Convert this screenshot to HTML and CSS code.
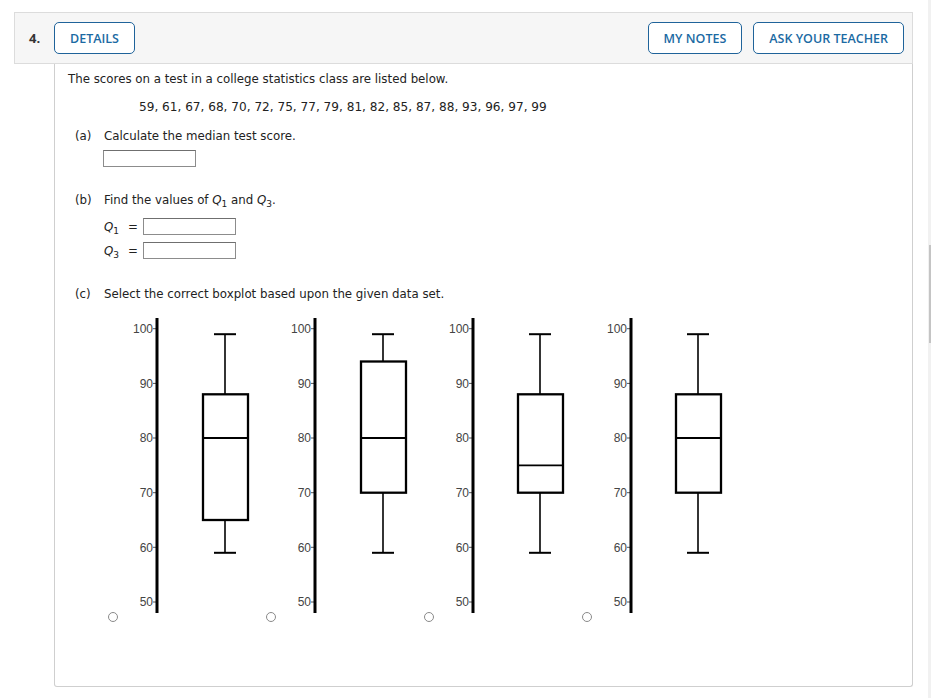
FILE: index.html
```html
<!DOCTYPE html>
<html>
<head>
<meta charset="utf-8">
<link rel="stylesheet" href="styles.css">
</head>
<body>
<div class="page">
  <div class="main">
    <div class="card">
      <div class="head">
        <span class="qnum">4.</span>
        <span class="btn">DETAILS</span>
        <span class="spacer"></span>
        <span class="btn notes">MY NOTES</span>
        <span class="btn">ASK YOUR TEACHER</span>
      </div>
      <div class="body">
        <p class="intro">The scores on a test in a college statistics class are listed below.</p>
        <p class="data">59, 61, 67, 68, 70, 72, 75, 77, 79, 81, 82, 85, 87, 88, 93, 96, 97, 99</p>

        <div class="part pa">
          <div class="prow"><span class="plabel">(a)</span><span>Calculate the median test score.</span></div>
          <div class="ans"><span class="inp"></span></div>
        </div>

        <div class="part pb">
          <div class="prow"><span class="plabel">(b)</span><span>Find the values of <i class="q">Q</i><sub>1</sub> and <i class="q">Q</i><sub>3</sub>.</span></div>
          <div class="qrow first"><span class="qlab"><i class="q">Q</i><sub>1</sub></span><span class="eq">=</span><span class="inp"></span></div>
          <div class="qrow"><span class="qlab"><i class="q">Q</i><sub>3</sub></span><span class="eq">=</span><span class="inp"></span></div>
        </div>

        <div class="part pc">
          <div class="prow"><span class="plabel">(c)</span><span>Select the correct boxplot based upon the given data set.</span></div>
          <div class="options">
            <div class="opt">
              <span class="radio"></span>
              <svg class="plot" width="140" height="310" viewBox="0 0 140 310">
                <g class="ticks">
                  <text x="35" y="17">100</text><text x="35" y="72">90</text><text x="35" y="126">80</text><text x="35" y="181">70</text><text x="35" y="236">60</text><text x="35" y="290">50</text>
                  <path d="M35 12.7H39M35 67.4H39M35 122H39M35 176.7H39M35 231.3H39M35 286H39" stroke="#555" stroke-width="1"/>
                </g>
                <line x1="39" y1="2" x2="39" y2="297" stroke="#000" stroke-width="3"/>
                <line x1="107" y1="18.2" x2="107" y2="78.3" stroke="#111" stroke-width="1.7"/>
                <line x1="107" y1="204" x2="107" y2="236.8" stroke="#111" stroke-width="1.7"/>
                <line x1="96" y1="18.2" x2="118" y2="18.2" stroke="#000" stroke-width="2"/>
                <line x1="96" y1="236.8" x2="118" y2="236.8" stroke="#000" stroke-width="2"/>
                <rect x="85" y="78.3" width="45" height="125.7" fill="#fff" stroke="#000" stroke-width="2.3"/>
                <line x1="85" y1="122" x2="130" y2="122" stroke="#000" stroke-width="1.8"/>
              </svg>
            </div>
            <div class="opt">
              <span class="radio"></span>
              <svg class="plot" width="140" height="310" viewBox="0 0 140 310">
                <g class="ticks">
                  <text x="35" y="17">100</text><text x="35" y="72">90</text><text x="35" y="126">80</text><text x="35" y="181">70</text><text x="35" y="236">60</text><text x="35" y="290">50</text>
                  <path d="M35 12.7H39M35 67.4H39M35 122H39M35 176.7H39M35 231.3H39M35 286H39" stroke="#555" stroke-width="1"/>
                </g>
                <line x1="39" y1="2" x2="39" y2="297" stroke="#000" stroke-width="3"/>
                <line x1="107" y1="18.2" x2="107" y2="45.5" stroke="#111" stroke-width="1.7"/>
                <line x1="107" y1="176.7" x2="107" y2="236.8" stroke="#111" stroke-width="1.7"/>
                <line x1="96" y1="18.2" x2="118" y2="18.2" stroke="#000" stroke-width="2"/>
                <line x1="96" y1="236.8" x2="118" y2="236.8" stroke="#000" stroke-width="2"/>
                <rect x="85" y="45.5" width="45" height="131.2" fill="#fff" stroke="#000" stroke-width="2.3"/>
                <line x1="85" y1="122" x2="130" y2="122" stroke="#000" stroke-width="1.8"/>
              </svg>
            </div>
            <div class="opt">
              <span class="radio"></span>
              <svg class="plot" width="140" height="310" viewBox="0 0 140 310">
                <g class="ticks">
                  <text x="35" y="17">100</text><text x="35" y="72">90</text><text x="35" y="126">80</text><text x="35" y="181">70</text><text x="35" y="236">60</text><text x="35" y="290">50</text>
                  <path d="M35 12.7H39M35 67.4H39M35 122H39M35 176.7H39M35 231.3H39M35 286H39" stroke="#555" stroke-width="1"/>
                </g>
                <line x1="39" y1="2" x2="39" y2="297" stroke="#000" stroke-width="3"/>
                <line x1="106" y1="18.2" x2="106" y2="78.3" stroke="#111" stroke-width="1.7"/>
                <line x1="106" y1="176.7" x2="106" y2="236.8" stroke="#111" stroke-width="1.7"/>
                <line x1="95" y1="18.2" x2="117" y2="18.2" stroke="#000" stroke-width="2"/>
                <line x1="95" y1="236.8" x2="117" y2="236.8" stroke="#000" stroke-width="2"/>
                <rect x="84" y="78.3" width="45" height="98.4" fill="#fff" stroke="#000" stroke-width="2.3"/>
                <line x1="84" y1="149.4" x2="129" y2="149.4" stroke="#000" stroke-width="1.8"/>
              </svg>
            </div>
            <div class="opt">
              <span class="radio"></span>
              <svg class="plot" width="140" height="310" viewBox="0 0 140 310">
                <g class="ticks">
                  <text x="35" y="17">100</text><text x="35" y="72">90</text><text x="35" y="126">80</text><text x="35" y="181">70</text><text x="35" y="236">60</text><text x="35" y="290">50</text>
                  <path d="M35 12.7H39M35 67.4H39M35 122H39M35 176.7H39M35 231.3H39M35 286H39" stroke="#555" stroke-width="1"/>
                </g>
                <line x1="39" y1="2" x2="39" y2="297" stroke="#000" stroke-width="3"/>
                <line x1="106" y1="18.2" x2="106" y2="78.3" stroke="#111" stroke-width="1.7"/>
                <line x1="106" y1="176.7" x2="106" y2="236.8" stroke="#111" stroke-width="1.7"/>
                <line x1="95" y1="18.2" x2="117" y2="18.2" stroke="#000" stroke-width="2"/>
                <line x1="95" y1="236.8" x2="117" y2="236.8" stroke="#000" stroke-width="2"/>
                <rect x="84" y="78.3" width="45" height="98.4" fill="#fff" stroke="#000" stroke-width="2.3"/>
                <line x1="84" y1="122" x2="129" y2="122" stroke="#000" stroke-width="1.8"/>
              </svg>
            </div>
          </div>
        </div>
      </div>
    </div>
  </div>
  <div class="track"><div class="thumb"></div></div>
</div>
</body>
</html>
```
FILE: styles.css
```css
html, body {
  margin: 0;
  padding: 0;
  background: #fff;
}
.page {
  display: flex;
  width: 931px;
  height: 698px;
  overflow: hidden;
}
.main {
  flex: 1;
  padding: 12px 0 0 14px;
}
.track {
  width: 3px;
  background: #f1f1f1;
}
.thumb {
  width: 2px;
  margin-left: 1px;
  margin-top: 245px;
  height: 98px;
  background: #c4c4c4;
}
.card {
  width: 899px;
}
.head {
  display: flex;
  align-items: center;
  height: 50px;
  border: 1px solid #dcdcdc;
  background: #f6f6f6;
  padding: 0 8px 0 14px;
  font-family: "Open Sans", "Liberation Sans", sans-serif;
}
.qnum {
  width: 25px;
  font-weight: 700;
  font-size: 13px;
  color: #333;
}
.spacer {
  flex: 1;
}
.btn {
  display: flex;
  align-items: center;
  justify-content: center;
  box-sizing: border-box;
  height: 32px;
  padding: 0 15px;
  border: 1px solid #1f639a;
  border-radius: 5px;
  background: #fff;
  color: #1b6aa3;
  font-size: 12.5px;
  font-weight: 600;
}
.notes {
  margin-right: 11px;
}
.body {
  margin-left: 40px;
  border: 1px solid #cfcfcf;
  border-top: 0;
  border-radius: 0 0 3px 3px;
  padding: 7px 13px 60px 13px;
  font-family: "DejaVu Sans", Verdana, sans-serif;
  font-size: 11.8px;
  line-height: 16px;
  color: #222;
}
.intro {
  margin: 0;
}
.data {
  margin: 12px 0 0 71px;
  font-size: 12.1px;
}
.part {
  margin-left: 7px;
}
.pa {
  margin-top: 13px;
}
.pb {
  margin-top: 25px;
}
.pc {
  margin-top: 27px;
}
.prow {
  display: flex;
}
.plabel {
  width: 29px;
}
.ans {
  margin: 6px 0 0 28px;
}
.inp {
  display: block;
  box-sizing: border-box;
  width: 93px;
  height: 17px;
  border: 1px solid #8c8c8c;
  border-top-color: #6f6f6f;
  background: #fff;
}
.q {
  font-style: italic;
}
sub {
  font-size: 9px;
  line-height: 0;
  vertical-align: -3px;
}
.qrow {
  display: flex;
  align-items: center;
  margin: 7px 0 0 29px;
}
.qrow.first {
  margin-top: 10px;
}
.qlab {
  width: 24px;
}
.eq {
  width: 15px;
}
.options {
  display: flex;
  gap: 8px;
  margin: 14px 0 0 33px;
}
.opt {
  display: flex;
  align-items: flex-end;
}
.radio {
  display: block;
  box-sizing: border-box;
  width: 10px;
  height: 10px;
  border: 1px solid #8a8a8a;
  border-radius: 50%;
  margin-bottom: 4px;
}
.plot {
  display: block;
}
.ticks text {
  font-family: "Liberation Sans", Arial, sans-serif;
  font-size: 12px;
  fill: #444;
  text-anchor: end;
}
```
